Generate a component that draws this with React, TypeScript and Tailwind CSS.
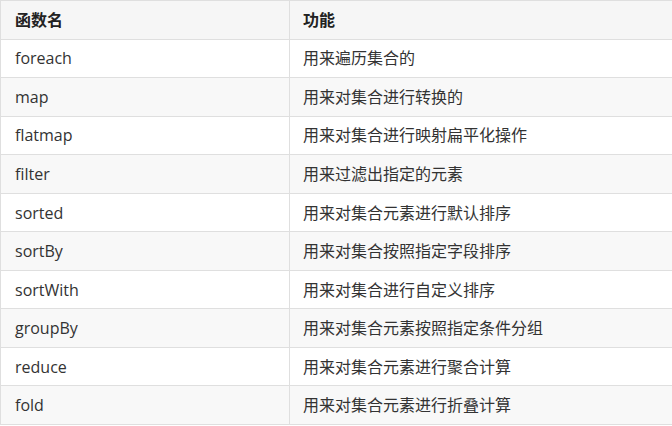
const rows: [string, string][] = [
	['foreach', '用来遍历集合的'],
	['map', '用来对集合进行转换的'],
	['flatmap', '用来对集合进行映射扁平化操作'],
	['filter', '用来过滤出指定的元素'],
	['sorted', '用来对集合元素进行默认排序'],
	['sortBy', '用来对集合按照指定字段排序'],
	['sortWith', '用来对集合进行自定义排序'],
	['groupBy', '用来对集合元素按照指定条件分组'],
	['reduce', '用来对集合元素进行聚合计算'],
	['fold', '用来对集合元素进行折叠计算'],
];

const font = "font-['Open_Sans','Noto_Sans_CJK_SC',sans-serif]";

export default function App() {
	return (
		<div className={`w-[672px] h-[426px] overflow-hidden bg-white text-[16px] text-[#333] ${font}`}>
			<div className="w-[680px] border-t border-l border-[#dfdfdf]">
				<div className="flex h-[38.55px] border-b border-[#dfdfdf] bg-[#f6f6f6] font-bold text-[#222]">
					<div className="w-[289px] shrink-0 border-r border-[#dfdfdf] pl-[14px] flex items-center">函数名</div>
					<div className="flex-1 pl-[13px] flex items-center">功能</div>
				</div>
				{rows.map(([name, desc], i) => (
					<div
						key={name}
						className={`flex h-[38.55px] border-b border-[#dfdfdf] ${i % 2 === 0 ? 'bg-white' : 'bg-[#f8f8f8]'}`}
					>
						<div className="w-[289px] shrink-0 border-r border-[#dfdfdf] pl-[14px] flex items-center">{name}</div>
						<div className="flex-1 pl-[13px] flex items-center">{desc}</div>
					</div>
				))}
			</div>
		</div>
	);
}
